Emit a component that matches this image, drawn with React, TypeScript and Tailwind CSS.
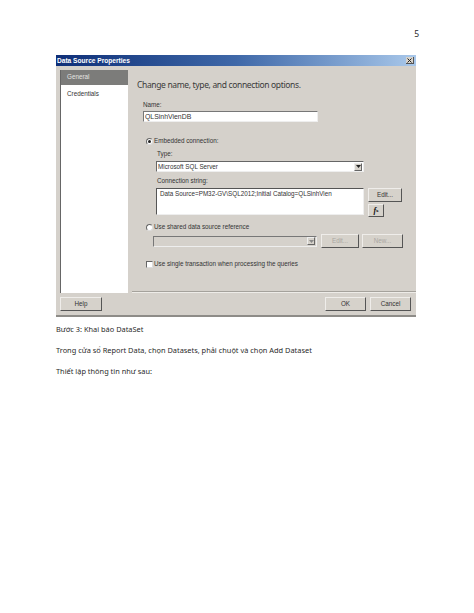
import React from 'react';

const dlgFont = "font-['Liberation_Sans',sans-serif]";

// raised win2k style button
const Btn = ({ label, w, disabled, ml }: { label: string; w: string; disabled?: boolean; ml?: string }) => (
  <div
    className={`${w} ${ml ?? ''} h-[14px] flex items-center justify-center text-[6.3px] bg-[#d6d2cb] border border-t-[#efedea] border-l-[#efedea] border-r-[#555] border-b-[#555] ${
      disabled ? 'text-[#a9a7a2]' : 'text-[#333]'
    }`}
  >
    {label}
  </div>
);

const Arrow = ({ disabled }: { disabled?: boolean }) => (
  <div className="w-[8px] h-[8px] mr-[1px] bg-[#d6d2cb] border border-t-[#eee] border-l-[#eee] border-r-[#666] border-b-[#666] flex items-center justify-center shrink-0">
    <svg width="5" height="3" viewBox="0 0 5 3">
      <path d="M0 0h5L2.5 3z" fill={disabled ? '#888' : '#222'} />
    </svg>
  </div>
);

const Radio = ({ on }: { on?: boolean }) => (
  <div className="w-[7px] h-[7px] rounded-full bg-white border border-t-[#666] border-l-[#666] border-r-[#ddd] border-b-[#ddd] flex items-center justify-center shrink-0">
    {on && <div className="w-[3px] h-[3px] rounded-full bg-[#222]" />}
  </div>
);

export default function App() {
  return (
    <div className="w-[474px] h-[613px] bg-white overflow-hidden font-['Noto_Sans',sans-serif] text-[#2a2a2a]">
      <div className="pt-[28px] pr-[55px] text-right text-[8.5px] leading-[12px]">5</div>

      {/* dialog screenshot */}
      <div className={`ml-[56px] mt-[15px] w-[360px] h-[262px] bg-[#d5d1cb] flex flex-col border-b-2 border-b-[#8e8c88] ${dlgFont}`}>
        <div className="h-[11px] shrink-0 bg-gradient-to-r from-[#0f2f78] via-[#3f68a8] to-[#a9c8ea] flex items-center justify-between pl-[1px] pr-[2px]">
          <span className="text-[6.6px] font-bold text-white">Data Source Properties</span>
          <div className="w-[8px] h-[7px] bg-[#d6d2cb] border-r border-b border-[#555] flex items-center justify-center">
            <svg width="5" height="5" viewBox="0 0 5 5">
              <path d="M0.5 0.5l4 4M4.5 0.5l-4 4" stroke="#222" strokeWidth="1" />
            </svg>
          </div>
        </div>

        <div className="flex h-[223px] mt-[4px] shrink-0">
          {/* left nav */}
          <div className="ml-[4px] w-[68px] bg-white border-l border-l-[#666] text-[6.3px] text-[#333] shrink-0">
            <div className="h-[15px] bg-[#7c7c7a] text-[#e4e4e2] pl-[6px] pt-[2px]">General</div>
            <div className="pl-[6px] pt-[4px]">Credentials</div>
          </div>

          {/* right pane */}
          <div className="flex-1 flex flex-col pl-[9px] text-[6.3px] leading-[8px] text-[#333] relative">
            <div className="mt-[8px] text-[8.5px] leading-[13px] tracking-[-0.35px] text-[#3a3a3a] font-['Noto_Sans',sans-serif]">Change name, type, and connection options.</div>

            <div className="ml-[6px] mt-[10px]">Name:</div>
            <div className="ml-[6px] mt-[2px] w-[175px] h-[11px] bg-white border border-t-[#777] border-l-[#777] border-r-[#eee] border-b-[#eee] pl-[1px] leading-[9px] text-[6.9px]">
              QLSinhVienDB
            </div>

            <div className="ml-[6px] mt-[15px] flex items-center gap-[1px]">
              <div className="ml-[3px]"><Radio on /></div>
              <span>Embedded connection:</span>
            </div>

            <div className="ml-[20px] mt-[5px]">Type:</div>
            <div className="ml-[19px] mt-[3px] w-[208px] h-[11px] bg-white border border-t-[#666] border-l-[#666] border-r-[#eee] border-b-[#eee] pl-[1px] flex items-center justify-between">
              <span>Microsoft SQL Server</span>
              <Arrow />
            </div>

            <div className="ml-[20px] mt-[5px]">Connection string:</div>
            <div className="ml-[19px] mt-[3px] flex">
              <div className="w-[208px] h-[27px] bg-white border border-t-[#555] border-l-[#555] border-r-[#eee] border-b-[#eee] pl-[3px] pt-[1px]">
                Data Source=PM32-GV\SQL2012;Initial Catalog=QLSinhVien
              </div>
              <div className="ml-[4px] flex flex-col gap-[2px]">
                <Btn label="Edit..." w="w-[34px]" />
                <div className="w-[16px] h-[13px] bg-[#d6d2cb] border border-t-[#efedea] border-l-[#efedea] border-r-[#555] border-b-[#555] flex items-center justify-center font-['Liberation_Serif',serif] italic font-bold text-[8px] leading-[8px] text-[#111]">
                  f<span className="text-[5px] not-italic">x</span>
                </div>
              </div>
            </div>

            <div className="ml-[9px] mt-[6px] flex items-center gap-[1px]">
              <Radio />
              <span>Use shared data source reference</span>
            </div>
            <div className="ml-[16px] mt-[3px] flex items-center">
              <div className="w-[164px] h-[11px] bg-[#d5d1cb] border border-t-[#777] border-l-[#777] border-r-[#eee] border-b-[#eee] flex items-center justify-end">
                <Arrow disabled />
              </div>
              <Btn label="Edit..." w="w-[38px]" disabled ml="ml-[4px]" />
              <Btn label="New..." w="w-[41px]" disabled ml="ml-[3px]" />
            </div>

            <div className="ml-[9px] mt-[12px] flex items-center gap-[1px]">
              <div className="w-[7px] h-[7px] bg-white border border-t-[#666] border-l-[#666] border-r-[#ddd] border-b-[#ddd] shrink-0" />
              <span>Use single transaction when processing the queries</span>
            </div>

            <div className="absolute left-[4px] right-0 bottom-0 border-t border-t-[#a5a29c] border-b border-b-[#eeece8]" />
          </div>
        </div>

        <div className="flex justify-between pl-[4px] pr-[5px] pt-[4px]">
          <Btn label="Help" w="w-[42px]" />
          <div className="flex gap-[4px]">
            <Btn label="OK" w="w-[41px]" />
            <Btn label="Cancel" w="w-[41px]" />
          </div>
        </div>
      </div>

      {/* body text */}
      <div className="ml-[56px] text-[7.4px] leading-[12px] text-[#2a2a2a]">
        <p className="mt-[6px]">Bước 3: Khai báo DataSet</p>
        <p className="mt-[9px]">Trong cửa sổ Report Data, chọn Datasets, phải chuột và chọn Add Dataset</p>
        <p className="mt-[9px]">Thiết lập thông tin như sau:</p>
      </div>
    </div>
  );
}
